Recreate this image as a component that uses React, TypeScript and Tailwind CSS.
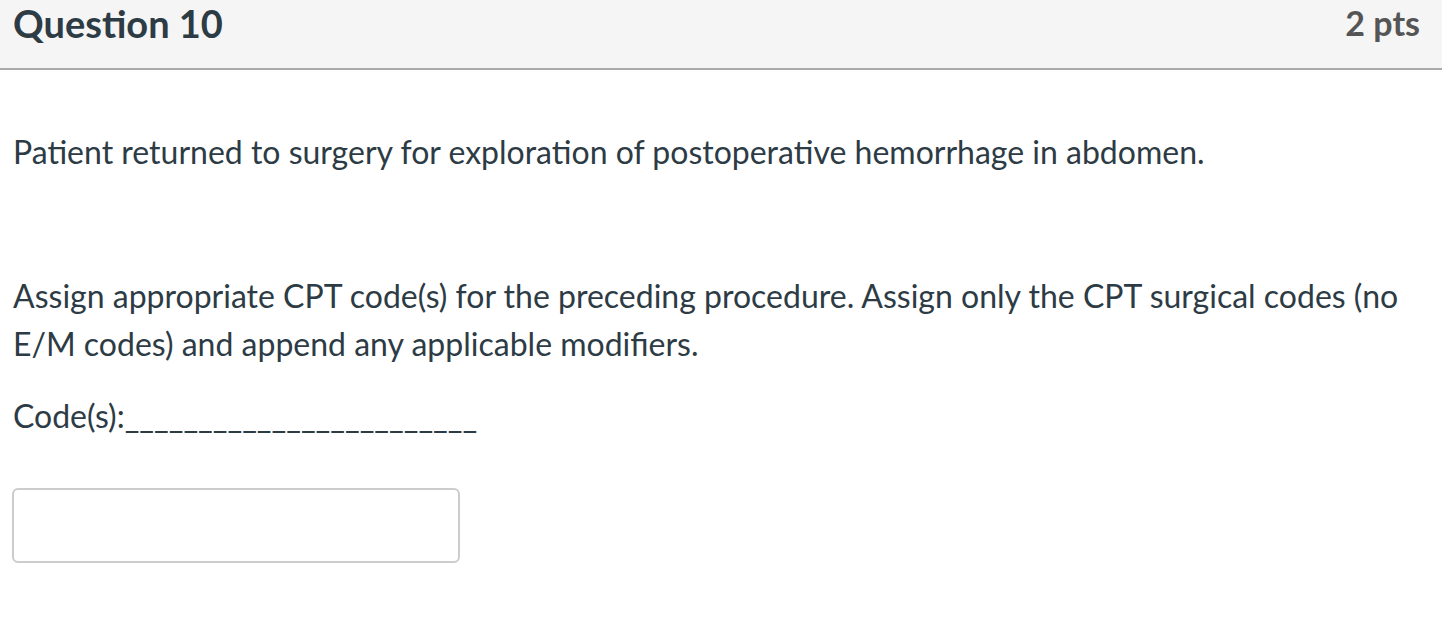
export default function App() {
  return (
    <div className="w-[1442px] h-[620px] bg-white overflow-hidden" style={{ fontFamily: "Lato, 'Noto Sans', sans-serif" }}>
      <div className="h-[70px] bg-[#f5f5f5] border-b-2 border-[#aaaaaa] flex items-start justify-between pl-[13px] pr-[22px]">
        <h2 className="text-[38px] font-bold text-[#2d3b45] leading-none pt-[4px]">Question 10</h2>
        <div className="text-[34px] font-bold text-[#555555] leading-none pt-[6px]">2 pts</div>
      </div>
      <div className="pl-[13px] pr-[30px] text-[32px] leading-[48px] text-[#2d3b45]">
        <p className="mt-[58px]">Patient returned to surgery for exploration of postoperative hemorrhage in abdomen.</p>
        <p className="mt-[96px]">Assign appropriate CPT code(s) for the preceding procedure. Assign only the CPT surgical codes (no E/M codes) and append any applicable modifiers.</p>
        <p className="mt-[24px]">Code(s):________________________</p>
        <input type="text" className="mt-[48px] -ml-[1px] block w-[448px] h-[75px] border-2 border-[#cccccc] rounded-[6px] bg-white" />
      </div>
    </div>
  );
}
